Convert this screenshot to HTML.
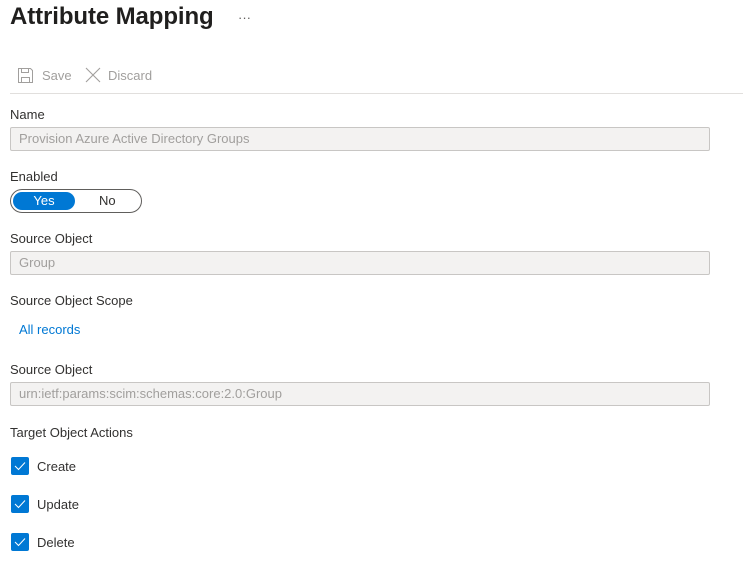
<!DOCTYPE html>
<html><head><style>
body{margin:0;width:743px;height:574px;background:#fff;font-family:"Liberation Sans",sans-serif;color:#323130;position:relative;overflow:hidden}
.a{position:absolute;white-space:nowrap}
.lbl{font-size:13px;color:#323130}
.inp{position:absolute;left:10px;height:22px;border:1px solid #c8c6c4;background:#f3f2f1;border-radius:2px;font-size:13px;color:#a19f9d;line-height:22px;padding-left:8px;box-sizing:content-box;width:690px}
.cb{position:absolute;left:11px;width:18px;height:18px;background:#0078d4;border-radius:2px}
.cb svg{position:absolute;left:3px;top:4px}
</style></head><body>
<div class="a" style="left:10px;top:3px;font-size:24px;font-weight:bold;color:#201f1e;letter-spacing:-0.1px">Attribute Mapping</div>
<div class="a" style="left:238px;top:10px;font-size:13px;color:#605e5c">···</div>
<svg class="a" style="left:17px;top:67px" width="17" height="17" viewBox="0 0 17 17" fill="none" stroke="#a19f9d" stroke-width="1"><path d="M1.5 1.5h12l2 2v12h-14z"/><path d="M4.5 1.5v4h7v-4"/><path d="M4.5 15.5v-5h8v5"/></svg>
<div class="a" style="left:42px;top:68px;font-size:13px;color:#a19f9d">Save</div>
<svg class="a" style="left:85px;top:67px" width="16" height="16" viewBox="0 0 16 16" stroke="#a19f9d" stroke-width="1.1"><path d="M1 1L15 15M15 1L1 15"/></svg>
<div class="a" style="left:108px;top:68px;font-size:13px;color:#a19f9d">Discard</div>
<div class="a" style="left:10px;top:93px;width:733px;height:1px;background:#e1dfdd"></div>
<div class="a lbl" style="left:10px;top:107px">Name</div>
<div class="inp" style="top:127px">Provision Azure Active Directory Groups</div>
<div class="a lbl" style="left:10px;top:169px">Enabled</div>
<div class="a" style="left:10px;top:189px;width:130px;height:22px;border:1px solid #605e5c;border-radius:12px"></div>
<div class="a" style="left:13px;top:192px;width:62px;height:18px;background:#0078d4;border-radius:9px;color:#fff;font-size:13px;text-align:center;line-height:18px">Yes</div>
<div class="a" style="left:99px;top:193px;font-size:13px">No</div>
<div class="a lbl" style="left:10px;top:231px">Source Object</div>
<div class="inp" style="top:251px">Group</div>
<div class="a lbl" style="left:10px;top:293px">Source Object Scope</div>
<div class="a" style="left:19px;top:322px;font-size:13px;color:#0078d4">All records</div>
<div class="a lbl" style="left:10px;top:362px">Source Object</div>
<div class="inp" style="top:382px">urn:ietf:params:scim:schemas:core:2.0:Group</div>
<div class="a lbl" style="left:10px;top:425px">Target Object Actions</div>
<div class="cb" style="top:457px"><svg width="12" height="10" viewBox="0 0 12 10" fill="none" stroke="#fff" stroke-width="1"><path d="M1 5l3.5 3.5L11 1.5"/></svg></div>
<div class="a lbl" style="left:37px;top:459px">Create</div>
<div class="cb" style="top:495px"><svg width="12" height="10" viewBox="0 0 12 10" fill="none" stroke="#fff" stroke-width="1"><path d="M1 5l3.5 3.5L11 1.5"/></svg></div>
<div class="a lbl" style="left:37px;top:497px">Update</div>
<div class="cb" style="top:533px"><svg width="12" height="10" viewBox="0 0 12 10" fill="none" stroke="#fff" stroke-width="1"><path d="M1 5l3.5 3.5L11 1.5"/></svg></div>
<div class="a lbl" style="left:37px;top:535px">Delete</div>
</body></html>
